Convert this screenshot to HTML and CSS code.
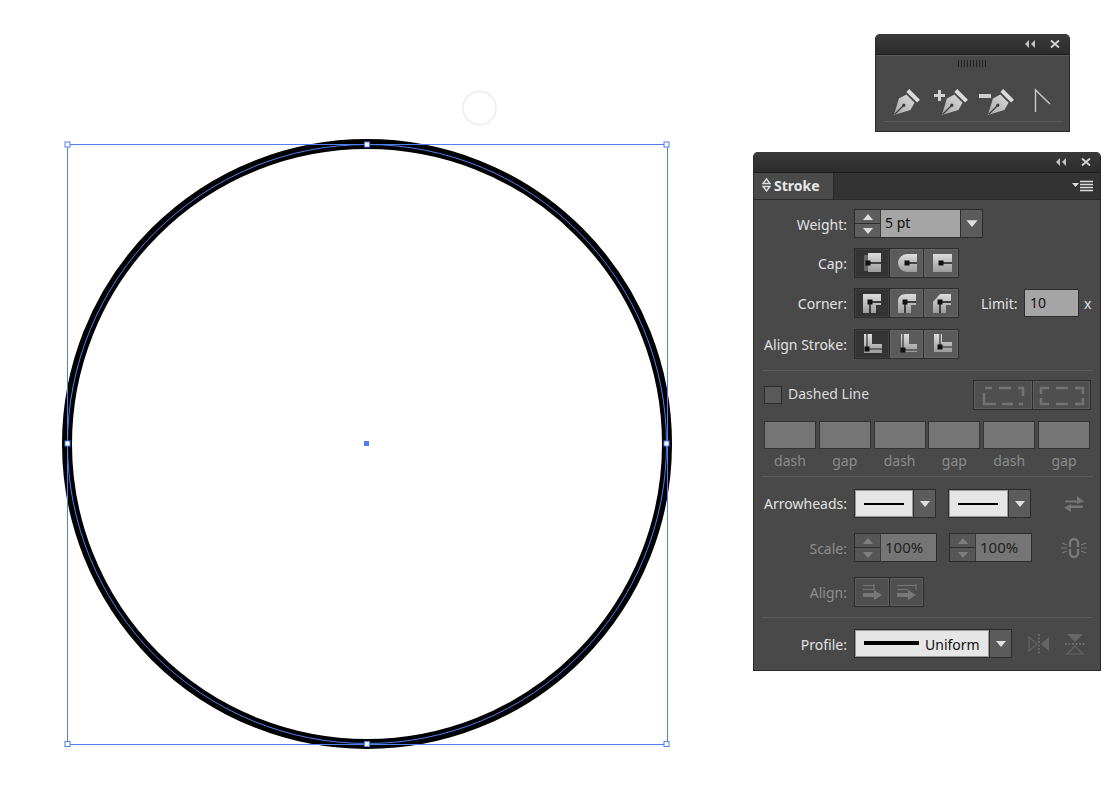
FILE: index.html
```html
<!DOCTYPE html>
<html lang="en">
<head>
<meta charset="utf-8">
<title>Stroke panel</title>
<link rel="stylesheet" href="styles.css">
</head>
<body>
<svg class="art" width="1109" height="800" viewBox="0 0 1109 800">
  <defs>
    <linearGradient id="lg" x1="0" y1="0" x2="0" y2="1"><stop offset="0" stop-color="#dcdcdc"/><stop offset="1" stop-color="#9c9c9c"/></linearGradient>
    <linearGradient id="nib" x1="0" y1="0" x2="0" y2="1"><stop offset="0" stop-color="#cfcfcf"/><stop offset="1" stop-color="#aaa"/></linearGradient>
    <symbol id="pen" viewBox="0 0 30 30">
      <g transform="translate(1 29) rotate(45) scale(1.25)">
        <path d="M0 0 L-7 -13 L-5 -20 H5 L7 -13 Z" fill="url(#nib)"/>
        <rect x="-6.500" y="-25" width="13" height="3.400" fill="#dcdcdc"/>
        <path d="M0 -1 V-11" stroke="#3a3a3a" stroke-width="1"/>
        <circle cx="0" cy="-12" r="1.400" fill="#3a3a3a"/>
      </g>
    </symbol>
    <symbol id="collapse" viewBox="0 0 12 10"><path d="M5 1V9L1 5ZM11 1V9L7 5Z" fill="#c4c4c4"/></symbol>
    <symbol id="close" viewBox="0 0 10 10"><path d="M1 1.500L9 8.500M9 1.500L1 8.500" stroke="#cfcfcf" stroke-width="2"/></symbol>
    <symbol id="up" viewBox="0 0 12 8"><path d="M6 1L11 7H1Z"/></symbol>
    <symbol id="down" viewBox="0 0 12 8"><path d="M1 1H11L6 7Z"/></symbol>
  </defs>
  <circle cx="479.500" cy="108" r="16.500" fill="none" stroke="#ececec" stroke-width="1.500"/>
  <circle cx="367" cy="444" r="300" fill="none" stroke="#000" stroke-width="10"/>
  <circle cx="367" cy="444" r="299.500" fill="none" stroke="#4f7ff0" stroke-width="1"/>
  <rect x="67.500" y="144.500" width="600" height="600" fill="none" stroke="#4f7ff0" stroke-width="1"/>
  <g fill="#fff" stroke="#4f7ff0" stroke-width="1">
    <rect x="65" y="142" width="5" height="5"/><rect x="364.500" y="142" width="5" height="5"/><rect x="664" y="142" width="5" height="5"/>
    <rect x="65" y="441" width="5" height="5"/><rect x="664" y="441" width="5" height="5"/>
    <rect x="65" y="741.500" width="5" height="5"/><rect x="364.500" y="741.500" width="5" height="5"/><rect x="664" y="741.500" width="5" height="5"/>
  </g>
  <rect x="364" y="441" width="5" height="5" fill="#4f7ff0"/>
</svg>

<section class="panel pen-panel">
  <header class="titlebar">
    <svg class="tb-ico" width="12" height="10"><use href="#collapse"/></svg>
    <svg class="tb-ico" width="10" height="10"><use href="#close"/></svg>
  </header>
  <div class="pen-body">
    <div class="gripper"></div>
    <div class="pen-tools">
      <svg class="tool" width="28" height="28"><use href="#pen"/></svg>
      <span class="tool-mod add"><i class="mod-h"></i><i class="mod-v"></i><svg class="tool" width="28" height="28"><use href="#pen"/></svg></span>
      <span class="tool-mod sub"><i class="mod-h"></i><svg class="tool" width="28" height="28"><use href="#pen"/></svg></span>
      <svg class="tool anchor" width="18" height="26" viewBox="0 0 18 26"><path d="M1.500 24V2L16 16" fill="none" stroke="#c8c8c8" stroke-width="1.400"/></svg>
    </div>
    <div class="pen-sep"></div>
  </div>
</section>

<section class="panel stroke-panel">
  <header class="titlebar">
    <svg class="tb-ico" width="12" height="10"><use href="#collapse"/></svg>
    <svg class="tb-ico" width="10" height="10"><use href="#close"/></svg>
  </header>
  <div class="tabs">
    <div class="tab">
      <svg width="9" height="14" viewBox="0 0 9 14"><path d="M4.500 1L8 5.500H1ZM1 8.500H8L4.500 13Z" fill="none" stroke="#ddd" stroke-width="1.400"/></svg>
      <span>Stroke</span>
    </div>
    <svg class="menu" width="22" height="12" viewBox="0 0 22 12"><path d="M0 3H7L3.500 7Z" fill="#ddd"/><path d="M8 1.500H21M8 4.500H21M8 7.500H21M8 10.500H21" stroke="#ddd" stroke-width="1.300"/></svg>
  </div>
  <div class="body">
    <div class="row r-weight">
      <label class="lbl">Weight:</label>
      <div class="combo weight">
        <span class="spin"><span><svg width="12" height="8"><use href="#up"/></svg></span><span><svg width="12" height="8"><use href="#down"/></svg></span></span>
        <span class="val">5 pt</span>
        <span class="drop"><svg width="14" height="9"><use href="#down"/></svg></span>
      </div>
    </div>

    <div class="row r-cap">
      <label class="lbl">Cap:</label>
      <div class="seg">
        <button class="btn on"><svg width="33" height="27" viewBox="0 0 33 27"><rect x="9" y="6" width="6" height="16" fill="#666"/><rect x="13" y="4" width="13" height="19" fill="url(#lg)"/><path d="M13 14H26" stroke="#111" stroke-width="1.400"/><rect x="10.500" y="11.500" width="5" height="5" fill="#111"/></svg></button>
        <button class="btn"><svg width="33" height="27" viewBox="0 0 33 27"><path d="M27 5H17A9 9 0 0 0 17 23H27Z" fill="url(#lg)"/><path d="M17 14H27" stroke="#111" stroke-width="1.400"/><rect x="14.500" y="11.500" width="5" height="5" fill="#111"/></svg></button>
        <button class="btn"><svg width="33" height="27" viewBox="0 0 33 27"><rect x="8" y="5" width="19" height="18" fill="url(#lg)"/><path d="M16 14H27" stroke="#111" stroke-width="1.400"/><rect x="13.500" y="11.500" width="5" height="5" fill="#111"/></svg></button>
      </div>
    </div>

    <div class="row r-corner">
      <label class="lbl">Corner:</label>
      <div class="seg">
        <button class="btn on"><svg width="33" height="27" viewBox="0 0 33 27"><path d="M8 5H26V16H21V24H8Z" fill="url(#lg)"/><path d="M15 24V13H26" fill="none" stroke="#111" stroke-width="1.400"/><rect x="12.500" y="10.500" width="5" height="5" fill="#111"/></svg></button>
        <button class="btn"><svg width="33" height="27" viewBox="0 0 33 27"><path d="M8 24V13Q8 5 16 5H26V16H21V24Z" fill="url(#lg)"/><path d="M15 24V13H26" fill="none" stroke="#111" stroke-width="1.400"/><rect x="12.500" y="10.500" width="5" height="5" fill="#111"/></svg></button>
        <button class="btn"><svg width="33" height="27" viewBox="0 0 33 27"><path d="M8 24V13L15 5H26V16H21V24Z" fill="url(#lg)"/><path d="M15 24V13H26" fill="none" stroke="#111" stroke-width="1.400"/><rect x="12.500" y="10.500" width="5" height="5" fill="#111"/></svg></button>
      </div>
      <label class="lbl lbl-limit">Limit:</label>
      <span class="limit">10</span>
      <span class="x">x</span>
    </div>

    <div class="row r-align">
      <label class="lbl">Align Stroke:</label>
      <div class="seg">
        <button class="btn on"><svg width="33" height="27" viewBox="0 0 33 27"><path d="M9 4H17V14H27V23H9Z" fill="url(#lg)"/><path d="M12 4V19H27" fill="none" stroke="#222" stroke-width="1.100"/><rect x="9.500" y="16.500" width="5" height="5" fill="#111"/></svg></button>
        <button class="btn"><svg width="33" height="27" viewBox="0 0 33 27"><path d="M11 4H19V14H27V22H11Z" fill="url(#lg)"/><path d="M13 4V20H27" fill="none" stroke="#222" stroke-width="1.100"/><rect x="10.500" y="17.500" width="5" height="5" fill="#111"/></svg></button>
        <button class="btn"><svg width="33" height="27" viewBox="0 0 33 27"><path d="M9 4H17V12H27V22H9Z" fill="url(#lg)"/><path d="M15 4V17H27" fill="none" stroke="#222" stroke-width="1.100"/><rect x="12.500" y="14.500" width="5" height="5" fill="#111"/></svg></button>
      </div>
    </div>

    <div class="sep s1"></div>

    <div class="row r-dash">
      <span class="check"></span>
      <label class="check-lbl">Dashed Line</label>
      <div class="seg dash-seg">
        <button class="btn off"><svg width="56" height="28" viewBox="0 0 56 28"><path d="M10 7H17M24 7H36M43 7H48V15M9 12V23H21M27 23H38M44 23H48" fill="none" stroke="#747474" stroke-width="2.500"/></svg></button>
        <button class="btn off"><svg width="56" height="28" viewBox="0 0 56 28"><path d="M8 13V7H16M23 7H35M42 7H50V13M8 17V23H16M23 23H35M42 23H50V17" fill="none" stroke="#747474" stroke-width="2.500"/></svg></button>
      </div>
    </div>

    <div class="fields">
      <div class="field"><span class="box"></span><span>dash</span></div>
      <div class="field"><span class="box"></span><span>gap</span></div>
      <div class="field"><span class="box"></span><span>dash</span></div>
      <div class="field"><span class="box"></span><span>gap</span></div>
      <div class="field"><span class="box"></span><span>dash</span></div>
      <div class="field"><span class="box"></span><span>gap</span></div>
    </div>

    <div class="sep s2"></div>

    <div class="row r-arrow">
      <label class="lbl">Arrowheads:</label>
      <div class="combo arrow">
        <span class="swatch"><i class="ln"></i></span>
        <span class="drop"><svg width="12" height="8"><use href="#down"/></svg></span>
      </div>
      <div class="combo arrow second">
        <span class="swatch"><i class="ln"></i></span>
        <span class="drop"><svg width="12" height="8"><use href="#down"/></svg></span>
      </div>
      <svg class="side swap" width="22" height="20" viewBox="0 0 22 20"><path d="M2 6.500H14V2L21 7.500L14 10V8.500H2ZM20 11.500H8V10L1 13.500L8 18V14H20Z" fill="#757575"/></svg>
    </div>

    <div class="row r-scale dim">
      <label class="lbl">Scale:</label>
      <div class="combo scale">
        <span class="spin"><span><svg width="12" height="8"><use href="#up"/></svg></span><span><svg width="12" height="8"><use href="#down"/></svg></span></span>
        <span class="val">100%</span>
      </div>
      <div class="combo scale second">
        <span class="spin"><span><svg width="12" height="8"><use href="#up"/></svg></span><span><svg width="12" height="8"><use href="#down"/></svg></span></span>
        <span class="val">100%</span>
      </div>
      <svg class="side link" width="26" height="22" viewBox="0 0 26 22"><path d="M9 10V6A4 4 0 0 1 17 6V10M9 12V16A4 4 0 0 0 17 16V12" fill="none" stroke="#7a7a7a" stroke-width="2.400"/><path d="M1 6L6 8M1 16L6 14M25 6L20 8M25 16L20 14M0 11H6M20 11H26" stroke="#7a7a7a" stroke-width="1.200"/></svg>
    </div>

    <div class="row r-align2 dim">
      <label class="lbl">Align:</label>
      <div class="seg seg-two">
        <button class="btn off"><svg width="33" height="27" viewBox="0 0 33 27"><path d="M8 7.500H19M19 6V12M8 11.500H19" fill="none" stroke="#777" stroke-width="1.200"/><path d="M8 15H19V12L27 17L19 22V19H8Z" fill="#777"/></svg></button>
        <button class="btn off"><svg width="33" height="27" viewBox="0 0 33 27"><path d="M7 7.500H26M26 6V12M7 11.500H18" fill="none" stroke="#777" stroke-width="1.200"/><path d="M7 15H18V12L26 17L18 22V19H7Z" fill="#777"/></svg></button>
      </div>
    </div>

    <div class="sep s3"></div>

    <div class="row r-profile">
      <label class="lbl">Profile:</label>
      <div class="combo profile">
        <span class="swatch"><i class="ln thick"></i><b>Uniform</b></span>
        <span class="drop"><svg width="12" height="8"><use href="#down"/></svg></span>
      </div>
      <svg class="side flip1" width="24" height="24" viewBox="0 0 24 24"><path d="M2 5L10 12L2 19Z" fill="none" stroke="#666" stroke-width="1.100"/><path d="M22 5L14 12L22 19Z" fill="#666"/><path d="M12 2V22" stroke="#888" stroke-dasharray="2 1.500"/></svg>
      <svg class="side flip2" width="24" height="24" viewBox="0 0 24 24"><path d="M4 2L12 10L20 2Z" fill="#666"/><path d="M4 22L12 14L20 22Z" fill="none" stroke="#666" stroke-width="1.100"/><path d="M2 12H22" stroke="#888" stroke-dasharray="2 1.500"/></svg>
    </div>
  </div>
</section>
</body>
</html>
```

FILE: styles.css
```css
* { box-sizing: border-box; }
html, body { margin: 0; padding: 0; background: #fff; }
body { width: 1109px; height: 800px; position: relative; overflow: hidden; font-family: "Noto Sans", "Open Sans", sans-serif; font-size: 14px; color: #e2e2e2; }
.art { position: absolute; left: 0; top: 0; display: block; }

.panel { position: absolute; background: #494949; border: 1px solid #2a2a2a; border-top: 0; border-radius: 5px 5px 0 0; display: flex; flex-direction: column; }
.pen-panel { left: 875px; top: 34px; width: 195px; height: 98px; }
.stroke-panel { left: 753px; top: 152px; width: 348px; height: 519px; }

.titlebar { height: 21px; flex: none; display: flex; justify-content: flex-end; align-items: center; gap: 14px; padding-right: 9px; background: linear-gradient(#3a3a3a, #2c2c2c); border-radius: 5px 5px 0 0; border-bottom: 1px solid #1c1c1c; }
.tb-ico { display: block; flex: none; }

.pen-body { flex: 1; display: flex; flex-direction: column; align-items: center; border-top: 1px solid #5a5a5a; }
.gripper { width: 29px; height: 7px; margin-top: 4px; flex: none; background: repeating-linear-gradient(90deg, #1f1f1f 0 1px, #4b4b4b 1px 3px); }
.pen-tools { display: flex; align-items: flex-end; height: 38px; align-self: stretch; padding-left: 17px; margin-top: 11px; flex: none; }
.tool { display: block; flex: none; }
.tool-mod { position: relative; display: block; width: 28px; height: 28px; flex: none; }
.tool-mod.add { margin-left: 20px; }
.tool-mod.sub { margin-left: 18px; }
.anchor { margin-left: 19px; margin-bottom: 2px; }
.mod-h { position: absolute; left: -7px; top: 6px; width: 11px; height: 3px; background: #d0d0d0; }
.mod-v { position: absolute; left: -3px; top: 2px; width: 3px; height: 11px; background: #d0d0d0; }
.sub .mod-h { left: -8px; top: 6px; width: 12px; height: 4px; }
.pen-sep { width: 180px; height: 1px; background: #5a5a5a; margin-top: 5px; flex: none; }

.tabs { height: 27px; flex: none; display: flex; justify-content: space-between; align-items: center; background: #333; padding-right: 6px; border-bottom: 1px solid #2a2a2a; }
.tab { width: 80px; height: 26px; background: #4a4a4a; border-right: 1px solid #282828; display: flex; align-items: center; gap: 3px; padding-left: 8px; padding-bottom: 2px; font-weight: 700; font-size: 14px; color: #e8e8e8; }
.tab svg { display: block; flex: none; }
.menu { display: block; flex: none; }

.body { flex: 1; display: flex; flex-direction: column; padding-top: 9px; }
.row { display: flex; align-items: center; height: 29px; flex: none; }
.lbl { width: 93px; margin-right: 7px; text-align: right; flex: none; white-space: nowrap; line-height: 31px; height: 29px; }
.r-arrow .lbl { line-height: 29px; }
.dim .lbl { color: #8e8e8e; }

.r-cap { margin-top: 10px; }
.r-corner { margin-top: 11px; }
.r-align { margin-top: 12px; }
.r-arrow { margin-top: 12px; }
.r-scale { margin-top: 15px; }
.r-align2 { margin-top: 15px; }
.r-profile { margin-top: 11px; }

.sep { height: 1px; margin-left: 8px; margin-right: 7px; background: #5a5a5a; flex: none; }
.s1 { margin-top: 12px; }
.s2 { margin-top: 5px; }
.s3 { margin-top: 11px; }

.combo { display: flex; height: 29px; border: 1px solid #2c2c2c; background: #5a5a5a; flex: none; }
.combo.weight { width: 129px; }
.combo.arrow { width: 82px; }
.combo.arrow.second { width: 83px; }
.combo.scale { width: 83px; }
.combo.second { margin-left: 12px; }
.combo.profile { width: 158px; }

.spin { width: 26px; display: flex; flex-direction: column; flex: none; border-right: 1px solid #3a3a3a; }
.spin span { flex: 1; display: flex; align-items: center; justify-content: center; background: #5e5e5e; fill: #dedede; }
.spin span + span { border-top: 1px solid #2c2c2c; }
.spin svg { display: block; }
.dim .spin span { fill: #7e7e7e; background: #565656; }

.val { flex: 1; background: #a5a5a5; color: #111; padding-left: 4px; line-height: 26px; }
.dim .val { background: #757575; color: #222; font-size: 15px; }
.drop { width: 22px; flex: none; display: flex; align-items: center; justify-content: center; background: #5c5c5c; border-left: 1px solid #2c2c2c; fill: #e0e0e0; }
.drop svg { display: block; }

.seg { display: flex; width: 105px; height: 30px; border: 1px solid #2c2c2c; background: #2c2c2c; gap: 1px; flex: none; }
.seg.seg-two { width: 70px; }
.btn { flex: 1; min-width: 0; height: 100%; margin: 0; padding: 0; border: 0; background: #5b5b5b; box-shadow: inset 0 0 0 1px #646464; display: flex; align-items: center; justify-content: center; overflow: hidden; }
.btn svg { display: block; flex: none; }
.btn.on { background: #343434; box-shadow: inset 0 0 0 1px #3e3e3e; }
.btn.off { background: #4f4f4f; box-shadow: inset 0 0 0 1px #5c5c5c; }

.lbl.lbl-limit { margin: 0 0 0 22px; width: 37px; text-align: left; }
.limit { width: 55px; height: 28px; margin-left: 6px; background: #a5a5a5; border: 1px solid #2c2c2c; color: #111; padding-left: 5px; line-height: 25px; flex: none; }
.x { margin-left: 5px; padding-top: 2px; }

.r-dash { margin-top: 9px; height: 30px; padding-left: 10px; }
.check { width: 18px; height: 18px; background: #5a5a5a; border: 1px solid #2c2c2c; flex: none; }
.check-lbl { margin-left: 6px; color: #dcdcdc; white-space: nowrap; line-height: 28px; height: 30px; }
.dash-seg { margin-left: auto; margin-right: 9px; width: 118px; }

.fields { display: grid; grid-template-columns: repeat(6, 52px); column-gap: 2.800px; margin-top: 11px; padding-left: 10px; flex: none; }
.field { display: flex; flex-direction: column; align-items: center; color: #8c8c8c; line-height: 24px; height: 50px; }
.box { width: 100%; height: 28px; background: #757575; border: 1px solid #333; flex: none; }

.swatch { flex: 1; display: flex; align-items: center; padding-left: 8px; background: #e6e6e6; border: 1px solid #9a9a9a; color: #111; }
.ln { width: 40px; height: 2px; background: #000; display: block; flex: none; }
.ln.thick { width: 55px; height: 4px; margin-right: 6px; margin-bottom: 1px; }
.swatch b { font-weight: 400; padding-top: 1px; }
.side { display: block; flex: none; }
.swap { margin-left: 32px; }
.link { margin-left: 29px; }
.flip1 { margin-left: 15px; }
.flip2 { margin-left: 12px; }
```
